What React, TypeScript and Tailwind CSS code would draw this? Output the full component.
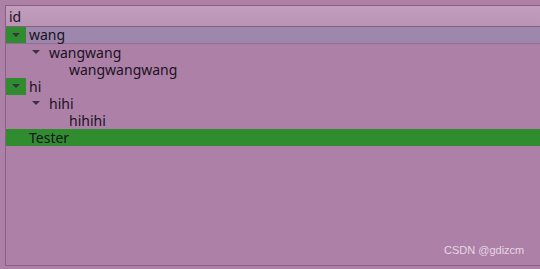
const rows = [
  { label: "wang", depth: 0, arrow: true, kind: "selected" },
  { label: "wangwang", depth: 1, arrow: true, kind: "" },
  { label: "wangwangwang", depth: 2, arrow: false, kind: "" },
  { label: "hi", depth: 0, arrow: true, kind: "" },
  { label: "hihi", depth: 1, arrow: true, kind: "" },
  { label: "hihihi", depth: 2, arrow: false, kind: "" },
  { label: "Tester", depth: 0, arrow: false, kind: "green" },
];

function Arrow() {
  return (
    <svg width="8" height="5" viewBox="0 0 8 5">
      <path d="M0 0 L8 0 L4 4 Z" fill="#3a3040" />
    </svg>
  );
}

export default function App() {
  return (
    <div
      className="w-[540px] h-[269px] bg-[#ad80a8] pt-[5px] pl-[5px] pb-[3px] overflow-hidden relative"
      style={{ fontFamily: '"Noto Sans", sans-serif' }}
    >
      <div className="h-[261px] border-l border-t border-b border-[#8a5f86] flex flex-col">
        {/* header */}
        <div className="h-[21px] shrink-0 bg-gradient-to-b from-[#c29dbe] to-[#b994b4] border-b border-[#86607f] flex items-center pl-[3px] text-[14px] text-[#1b1320]">
          id
        </div>
        {rows.map((r) => {
          const rowBg =
            r.kind === "selected"
              ? "bg-[#9d87ac] border-b border-[#8d6f94]"
              : r.kind === "green"
              ? "bg-[#2f8c2f]"
              : "";
          return (
            <div key={r.label} className={`h-[17px] shrink-0 flex items-center ${rowBg}`}>
              <div
                className={`w-[20px] h-full shrink-0 flex items-center justify-center ${
                  r.depth === 0 && r.arrow ? "bg-[#2f8c2f]" : ""
                }`}
              >
                {r.depth === 0 && r.arrow ? <Arrow /> : null}
              </div>
              {r.depth >= 1 && (
                <div className="w-[20px] h-full shrink-0 flex items-center justify-center">
                  {r.depth === 1 && r.arrow ? <Arrow /> : null}
                </div>
              )}
              {r.depth >= 2 && <div className="w-[20px] shrink-0" />}
              <span className="pl-[3px] text-[14px] leading-none text-[#1a1220]">{r.label}</span>
            </div>
          );
        })}
        <div className="flex-1" />
      </div>
      <div
        className="absolute left-[444px] top-[242px] text-[11px] text-[#e6d6e4]"
        style={{ fontFamily: '"Liberation Sans", sans-serif' }}
      >
        CSDN @gdizcm
      </div>
    </div>
  );
}
